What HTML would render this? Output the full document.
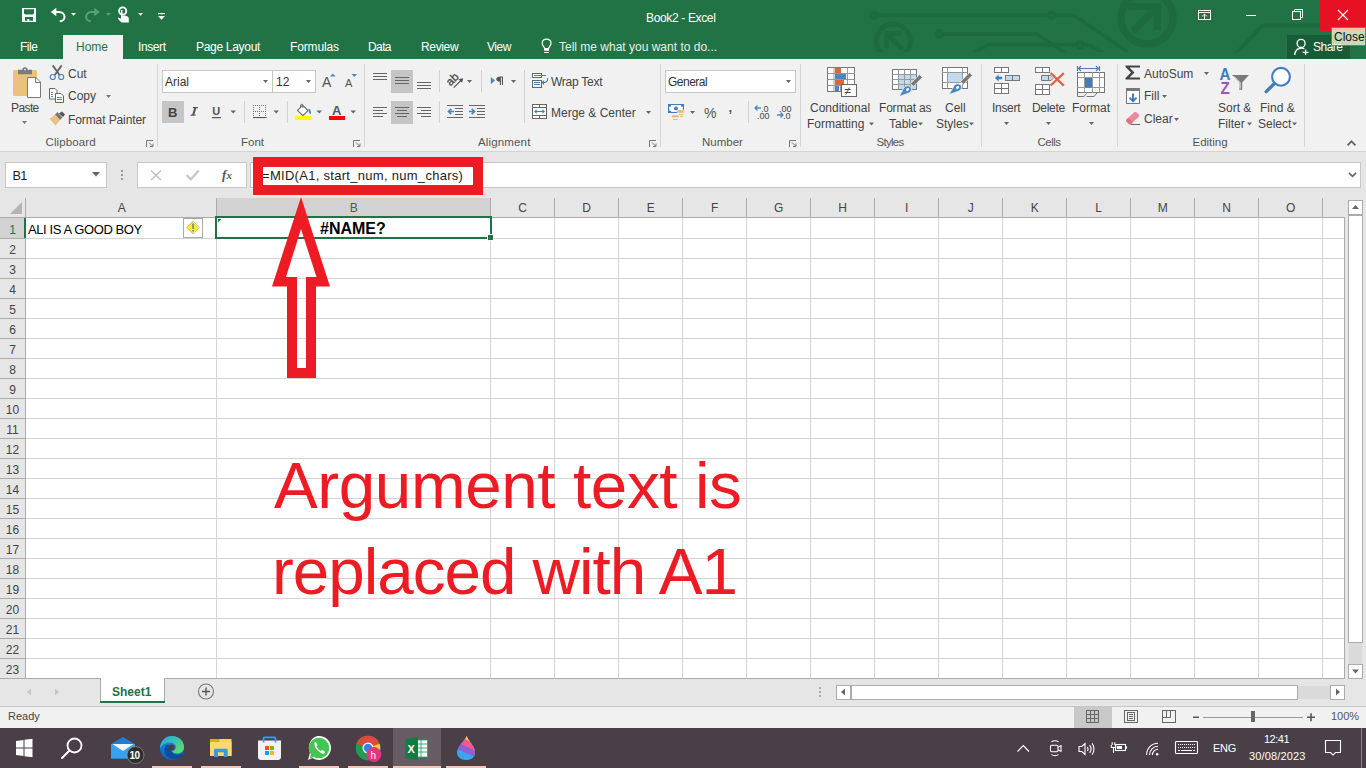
<!DOCTYPE html>
<html><head><meta charset="utf-8">
<style>
*{margin:0;padding:0;box-sizing:border-box}
html,body{width:1366px;height:768px;overflow:hidden;background:#fff;font-family:"Liberation Sans",sans-serif}
svg{font-family:"Liberation Sans",sans-serif}
.a{position:absolute}
.t{position:absolute;white-space:pre;line-height:1}
.rt{color:#444;font-size:12px}
.gl{color:#555;font-size:11.5px}
.wt{color:#fff;font-size:12px}
.sep{top:64px;width:1px;height:83px;background:#d5d5d5}
.hd{font-size:12px;color:#444}
.rl{left:0;width:25px;height:20px;text-align:center;font-size:12px;line-height:20px;color:#444;padding-top:2px}
.pb{top:766px;height:2px;background:#f6c6b5}
</style></head><body>
<!-- TITLE BAR -->
<div class="a" style="left:0;top:0;width:1366px;height:59px;background:#217346"></div>
<svg class="a" style="left:0;top:0" width="1366" height="59" viewBox="0 0 1366 59">
 <defs><clipPath id="cp"><rect x="0" y="0" width="1366" height="52"/></clipPath></defs>
 <g clip-path="url(#cp)" stroke="#1d6a3e" fill="none" stroke-width="3.8">
  <circle cx="873.8" cy="15.4" r="3"/>
  <path d="M877 15.4 H1048 M1055 15.4 H1074 L1128 52"/>
  <circle cx="1051.5" cy="15.4" r="3"/>
  <circle cx="893.3" cy="41" r="17" stroke-width="5"/>
  <circle cx="939.4" cy="33.8" r="3"/>
  <path d="M943 33.8 H1037 L1065 53"/>
  <path d="M974 53 L988 44.6 H1076 M1084 44.6 H1089 L1103 53"/>
  <circle cx="1080" cy="44.6" r="3"/>
  <circle cx="1147" cy="18" r="26" stroke-width="7.5"/>
  <path d="M1236 53 L1262.6 25.5 H1366"/>
 </g>
 <g clip-path="url(#cp)" fill="#1d6a3e">
  <path d="M884 31.3 H901 V36.3 H893 L904 47.3 L900.5 50.8 L889 39.5 V47.7 H884 Z"/>
 </g>
 <!-- big arrow up-right inside big circle -->
 <g fill="#1d6a3e">
  <path d="M1128 3 H1161 V30 H1154 V15 L1135 34 L1130 29 L1149 10 H1128 Z"/>
 </g>
</svg>
<!-- QAT icons -->
<svg class="a" style="left:0;top:0" width="180" height="32" viewBox="0 0 180 32">
 <path fill="#fff" fill-rule="evenodd" d="M22 8 H36 V22 H22 Z M24 9.3 V13.5 L25.2 14.6 H32.8 L34 13.5 V9.3 Z M25 17 V20.7 H27.3 V19 H29.3 V20.7 H33 V17 Z"/>
 <path d="M50.8 12 L56.3 7.8 V16.2 Z" fill="#fff"/>
 <path d="M55 12 H59 C62.2 12 64.5 14.2 64.5 17 C64.5 19.5 62.5 21.2 59.8 21.2" stroke="#fff" stroke-width="2" fill="none"/>
 <path d="M71 13 H76 L73.5 15.8 Z" fill="#fff"/>
 <path d="M99.85 12 L94.35 7.8 V16.2 Z" fill="#5c9f78"/>
 <path d="M95.65 12 H91.65 C88.45 12 86.15 14.2 86.15 17 C86.15 19.5 88.15 21.2 90.85 21.2" stroke="#5c9f78" stroke-width="2" fill="none"/>
 <path d="M106 13 H111 L108.5 15.8 Z" fill="#5c9f78"/>
 <circle cx="122.7" cy="11" r="3.6" fill="none" stroke="#fff" stroke-width="1.9"/>
 <path d="M121 10.5 C121 9.5 122.5 9.5 122.5 10.5 V15.5 C125 15.5 128.8 16 128.8 18.5 V22.6 H121.5 L117.6 18.5 L118.6 17.4 L121 18.8 Z" fill="#fff"/>
 <path d="M138 13 H143 L140.5 15.8 Z" fill="#fff"/>
 <rect x="158" y="13" width="7" height="1.2" fill="#fff"/>
 <path d="M158 16 H165 L161.5 19.8 Z" fill="#fff"/>
</svg>
<div class="t wt" style="left:646px;top:12px;letter-spacing:-0.35px">Book2 - Excel</div>
<!-- window controls -->
<svg class="a" style="left:1190;top:0;left:1190px" width="176" height="60" viewBox="1190 0 176 60">
 <rect x="1320" y="0" width="46" height="31" fill="#e81123"/>
 <g fill="none" stroke="#fff" stroke-width="1">
  <rect x="1198.5" y="10.5" width="12" height="9"/>
  <path d="M1198.5 12.5 H1210.5"/>
  <path d="M1204.5 19.5 V14 M1202.2 16.3 L1204.5 14 L1206.8 16.3"/>
  <path d="M1246 15.5 H1256"/>
  <rect x="1292.5" y="11.5" width="8" height="8"/>
  <path d="M1294.5 11.5 V9.5 H1302.5 V17.5 H1300.5"/>
  <path d="M1338 10 L1348 20 M1348 10 L1338 20" stroke-width="1.1"/>
 </g>
 <rect x="1287" y="35" width="63" height="24" fill="#185c37"/>
 <g fill="none" stroke="#fff" stroke-width="1.3">
  <circle cx="1301.1" cy="43.4" r="4"/>
  <path d="M1294.6 55 C1295.2 50.5 1298 48 1301.5 48 C1302.6 48 1303.5 48.3 1304.3 48.8"/>
  <path d="M1305.6 49.5 V55 M1302.6 52.4 H1308.6"/>
 </g>
</svg>
<div class="t wt" style="left:1313px;top:41px;letter-spacing:-0.5px">Share</div>
<div class="a" style="left:1331px;top:27px;width:35px;height:19px;background:rgba(255,255,225,0.75);border:1px solid rgba(80,80,80,0.7)"></div>
<div class="t" style="left:1334px;top:31px;font-size:12px;color:#111">Close</div>
<!-- tabs -->
<div class="t wt" style="left:20px;top:41px;letter-spacing:-0.5px">File</div>
<div class="a" style="left:63px;top:35px;width:60px;height:24px;background:#f1f1f1"></div>
<div class="t" style="left:76px;top:41px;font-size:12px;color:#217346">Home</div>
<div class="t wt" style="left:138px;top:41px;letter-spacing:-0.4px">Insert</div>
<div class="t wt" style="left:196px;top:41px;letter-spacing:-0.3px">Page Layout</div>
<div class="t wt" style="left:290px;top:41px;letter-spacing:-0.15px">Formulas</div>
<div class="t wt" style="left:368px;top:41px;letter-spacing:-0.6px">Data</div>
<div class="t wt" style="left:421px;top:41px;letter-spacing:-0.35px">Review</div>
<div class="t wt" style="left:487px;top:41px;letter-spacing:-0.5px">View</div>
<svg class="a" style="left:530px;top:34px" width="30" height="24" viewBox="530 34 30 24">
 <path d="M544.6 48.6 C544.6 46.8 542.2 45.6 542.2 43.4 C542.2 40.9 544.1 39.2 546.6 39.2 C549.1 39.2 551 40.9 551 43.4 C551 45.6 548.6 46.8 548.6 48.6 Z" fill="none" stroke="#fff" stroke-width="1.2"/>
 <rect x="544.2" y="48.4" width="4.8" height="2.4" fill="#fff"/>
 <rect x="544.3" y="52" width="4.6" height="1" fill="#fff"/>
</svg>
<div class="t wt" style="left:559px;top:41px;color:#e8efe9">Tell me what you want to do...</div>
<!-- RIBBON -->
<div class="a" style="left:0;top:59px;width:1366px;height:92px;background:#f1f1f1"></div>
<div class="a" style="left:0;top:151px;width:1366px;height:1px;background:#d4d4d4"></div>
<!-- group separators -->
<div class="a sep" style="left:157px"></div>
<div class="a sep" style="left:364px"></div>
<div class="a sep" style="left:660px"></div>
<div class="a sep" style="left:800px"></div>
<div class="a sep" style="left:981px"></div>
<div class="a sep" style="left:1117px"></div>
<div class="a sep" style="left:1304px"></div>
<!-- group labels -->
<div class="t gl" style="left:45.5px;top:137.3px;letter-spacing:0.1px">Clipboard</div>
<div class="t gl" style="left:241px;top:137.3px">Font</div>
<div class="t gl" style="left:478px;top:137.3px;letter-spacing:0.15px">Alignment</div>
<div class="t gl" style="left:702px;top:137.3px">Number</div>
<div class="t gl" style="left:876.5px;top:137.3px;letter-spacing:-0.7px">Styles</div>
<div class="t gl" style="left:1037.5px;top:137.3px;letter-spacing:-0.5px">Cells</div>
<div class="t gl" style="left:1192.5px;top:137.3px">Editing</div>
<!-- launchers -->
<svg class="a" style="left:0;top:59px" width="1366" height="93" viewBox="0 59 1366 93">
 <g fill="none" stroke="#777" stroke-width="1">
  <path d="M146.5 147 V140.5 H153 M149 142.5 L152.5 146"/><path d="M150 146.5 H153 V143.5" />
  <path d="M353.5 147 V140.5 H360 M356 142.5 L359.5 146"/><path d="M357 146.5 H360 V143.5"/>
  <path d="M649.5 147 V140.5 H656 M652 142.5 L655.5 146"/><path d="M653 146.5 H656 V143.5"/>
  <path d="M789.5 147 V140.5 H796 M792 142.5 L795.5 146"/><path d="M793 146.5 H796 V143.5"/>
 </g>
 <path d="M1347.5 145.3 L1351.5 141.3 L1355.5 145.3" fill="none" stroke="#666" stroke-width="1.9"/>
</svg>

<!-- CLIPBOARD -->
<svg class="a" style="left:0;top:59px" width="157" height="80" viewBox="0 59 157 80">
 <rect x="13" y="70" width="24" height="26" rx="1.5" fill="#ebc17b"/>
 <path d="M18 74.2 V69.8 H22.3 C22.3 68 23.3 67.2 25 67.2 C26.7 67.2 27.7 68 27.7 69.8 H32 V74.2 Z" fill="#7b7b7b"/>
 <circle cx="25" cy="69.6" r="0.9" fill="#f1f1f1"/>
 <path d="M27.5 77.5 H36 L40.5 82 V97.5 H27.5 Z" fill="#fff" stroke="#7b7b7b" stroke-width="1"/>
 <path d="M35.5 77.5 V82.5 H40.5" fill="none" stroke="#7b7b7b" stroke-width="1"/>
 <path d="M22 121 H27 L24.5 124 Z" fill="#777"/>
 <!-- scissors -->
 <path d="M52.7 65.4 L59.6 75 M61.7 65.4 L54.8 75" stroke="#666" stroke-width="1.9" fill="none"/>
 <circle cx="52.8" cy="77" r="2.5" fill="none" stroke="#4a86c5" stroke-width="1.2"/>
 <circle cx="61.2" cy="77" r="2.5" fill="none" stroke="#4a86c5" stroke-width="1.2"/>
 <!-- copy -->
 <path d="M49.5 88.5 H55 L57 90.5 V99 H49.5 Z" fill="#fff" stroke="#666" stroke-width="1"/>
 <path d="M55.5 93.5 H61 L63.5 96 V102.5 H55.5 Z" fill="#fff" stroke="#666" stroke-width="1"/>
 <path d="M51 92.5 H53 M51 94.5 H53 M51 96.5 H53 M57 97.5 H62 M57 99.5 H62" stroke="#4a86c5" stroke-width="1"/>
 <path d="M106 95 H111 L108.5 98 Z" fill="#777"/>
 <!-- format painter -->
 <path d="M49.5 119 L55 114.5 L60 120 L55.5 125.5 Z" fill="#ebc17b"/>
 <path d="M55 114.5 L60 120 L62.5 117.5 L57.5 112 Z" fill="#7b7b7b"/>
 <path d="M59 113.5 L62 111.5 L65 114.5 L63 117 Z" fill="#555"/>
</svg>
<div class="t rt" style="left:11px;top:102px;letter-spacing:-0.6px">Paste</div>
<div class="t rt" style="left:68px;top:68px">Cut</div>
<div class="t rt" style="left:68px;top:90px">Copy</div>
<div class="t rt" style="left:68px;top:114px;letter-spacing:-0.1px">Format Painter</div>

<!-- FONT -->
<div class="a" style="left:162px;top:70px;width:111px;height:23px;background:#fff;border:1px solid #c6c6c6"></div>
<div class="a" style="left:272px;top:70px;width:44px;height:23px;background:#fff;border:1px solid #c6c6c6"></div>
<div class="t rt" style="left:165px;top:76px;color:#333">Arial</div>
<div class="t rt" style="left:276px;top:76px;color:#333">12</div>
<div class="a" style="left:162px;top:101px;width:22px;height:22px;background:#c5c5c5"></div>
<svg class="a" style="left:157px;top:59px" width="206" height="80" viewBox="157 59 206 80">
 <path d="M263 80 H268 L265.5 83 Z M306 80 H311 L308.5 83 Z" fill="#666"/>
 <text x="322" y="87" font-family="Liberation Sans" font-size="14" fill="#555">A</text>
 <path d="M330 76.5 H335.5 L332.75 73.5 Z" fill="#4a86c5"/>
 <text x="345" y="87" font-family="Liberation Sans" font-size="11" fill="#555">A</text>
 <path d="M351.5 74 H357 L354.25 77 Z" fill="#4a86c5"/>
 <text x="168" y="117" font-family="Liberation Sans" font-weight="bold" font-size="13" fill="#444">B</text>
 <path d="M193 107 H198 L197.7 108.3 H196.3 L194.3 114.4 H195.7 L195.4 115.7 H190.5 L190.8 114.4 H192.2 L194.2 108.3 H192.7 Z" fill="#555"/>
 <text x="212.3" y="115.4" font-family="Liberation Sans" font-weight="bold" font-size="11" fill="#555">U</text>
 <rect x="212" y="117" width="9" height="1.2" fill="#555"/>
 <path d="M230.5 110.5 H236 L233.25 113.5 Z M273.5 110.5 H279 L276.25 113.5 Z M316.5 110.5 H322 L319.25 113.5 Z M350.5 110.5 H356 L353.25 113.5 Z" fill="#666"/>
 <rect x="244" y="101" width="1" height="22" fill="#d0d0d0"/>
 <rect x="287" y="101" width="1" height="22" fill="#d0d0d0"/>
 <g fill="#777">
  <path d="M253 105h1v1h-1zM255 105h1v1h-1zM257 105h1v1h-1zM259 105h1v1h-1zM261 105h1v1h-1zM263 105h1v1h-1zM265 105h1v1h-1z"/>
  <path d="M253 107h1v1h-1zM253 109h1v1h-1zM253 111h1v1h-1zM253 113h1v1h-1zM253 115h1v1h-1z"/>
  <path d="M265 107h1v1h-1zM265 109h1v1h-1zM265 111h1v1h-1zM265 113h1v1h-1zM265 115h1v1h-1z"/>
  <path d="M259 107h1v1h-1zM259 109h1v1h-1zM259 113h1v1h-1zM259 115h1v1h-1z"/>
  <path d="M255 111h1v1h-1zM257 111h1v1h-1zM259 111h1v1h-1zM261 111h1v1h-1zM263 111h1v1h-1z"/>
 </g>
 <rect x="253" y="117" width="13.5" height="1.1" fill="#555"/>
 <!-- fill bucket -->
 <path d="M297.5 110.3 L302.6 105.2 L308 110.6 L302.9 115.7 Z" fill="#fff" stroke="#666" stroke-width="1.1"/>
 <path d="M300.6 108.2 V105.2 C300.6 104 302.8 104 302.8 105.2 V108" stroke="#666" stroke-width="1" fill="none"/>
 <path d="M308.2 108.8 C310.8 109.4 311.8 112 310.2 114.6 C309.2 113 308.2 111 308.2 108.8 Z" fill="#4a86c5"/>
 <rect x="295" y="116" width="16.5" height="4" fill="#ffff00"/>
 <text x="332" y="115.4" font-family="Liberation Sans" font-weight="bold" font-size="13" fill="#555">A</text>
 <rect x="329" y="116" width="16" height="4" fill="#ff0000"/>
</svg>

<!-- ALIGNMENT -->
<div class="a" style="left:391px;top:70px;width:22px;height:23px;background:#c5c5c5"></div>
<div class="a" style="left:391px;top:101px;width:22px;height:23px;background:#c5c5c5"></div>
<svg class="a" style="left:364px;top:59px" width="296" height="80" viewBox="364 59 296 80">
 <g fill="#666">
  <rect x="373" y="73" width="14" height="1"/><rect x="373" y="76" width="14" height="1"/><rect x="373" y="79" width="14" height="1"/>
  <rect x="395" y="77" width="14" height="1"/><rect x="395" y="80" width="14" height="1"/><rect x="395" y="83" width="14" height="1"/>
  <rect x="417" y="82" width="14" height="1"/><rect x="417" y="85" width="14" height="1"/><rect x="417" y="88" width="14" height="1"/>
  <rect x="373" y="107" width="14" height="1"/><rect x="373" y="110" width="10" height="1"/><rect x="373" y="113" width="14" height="1"/><rect x="373" y="116" width="10" height="1"/>
  <rect x="395" y="107" width="14" height="1"/><rect x="397" y="110" width="10" height="1"/><rect x="395" y="113" width="14" height="1"/><rect x="397" y="116" width="10" height="1"/>
  <rect x="417" y="107" width="14" height="1"/><rect x="421" y="110" width="10" height="1"/><rect x="417" y="113" width="14" height="1"/><rect x="421" y="116" width="10" height="1"/>
 </g>
 <rect x="439" y="70" width="1" height="22" fill="#d0d0d0"/>
 <rect x="481" y="70" width="1" height="22" fill="#d0d0d0"/>
 <rect x="524" y="70" width="1" height="53" fill="#d0d0d0"/>
 <rect x="439" y="101" width="1" height="22" fill="#d0d0d0"/>
 <!-- orientation -->
 <text x="0" y="0" font-family="Liberation Sans" font-size="11.5" fill="#4d4d4d" stroke="#4d4d4d" stroke-width="0.35" transform="translate(450.5 86.5) rotate(-45)">ab</text>
 <path d="M453.8 87.6 L461.5 79.9" stroke="#4d4d4d" stroke-width="1.2"/>
 <path d="M463.2 78.2 L458.6 79.3 L462.1 82.8 Z" fill="#4d4d4d"/>
 <path d="M467 80 H472 L469.5 83 Z" fill="#666"/>
 <!-- rtl -->
 <path d="M490.8 76.9 L495 80.6 L490.8 84.3 Z" fill="#4a86c5"/>
 <path d="M500.5 76.5 H503 V85 H501.9 V77.6 H500.9 V85 H499.8 V81.6 C497.8 81.6 496.2 80.6 496.2 79 C496.2 77.5 497.8 76.5 500.5 76.5 Z" fill="#555"/>
 <path d="M511 80 H516 L513.5 83 Z" fill="#666"/>
 <!-- indent -->
 <g fill="#666">
  <rect x="447" y="105" width="16" height="1"/><rect x="455" y="108" width="8" height="1"/><rect x="455" y="111" width="8" height="1"/><rect x="455" y="114" width="8" height="1"/><rect x="447" y="117" width="16" height="1"/>
  <rect x="469" y="105" width="16" height="1"/><rect x="477" y="108" width="8" height="1"/><rect x="477" y="111" width="8" height="1"/><rect x="477" y="114" width="8" height="1"/><rect x="469" y="117" width="16" height="1"/>
 </g>
 <path d="M448.5 111.5 H454 M451.3 108.8 L448.5 111.5 L451.3 114.2" stroke="#4a86c5" stroke-width="1.7" fill="none"/>
 <path d="M469 111.5 H474.5 M471.7 108.8 L474.5 111.5 L471.7 114.2" stroke="#4a86c5" stroke-width="1.7" fill="none"/>
 <!-- wrap text icon -->
 <g fill="#fff" stroke="#666" stroke-width="1">
  <rect x="532.5" y="73.5" width="9" height="4"/>
  <rect x="532.5" y="80.5" width="9" height="7"/>
 </g>
 <path d="M534 75.5 H546 M534 82.5 H540 M534 84.5 H540" stroke="#3f7cc0" stroke-width="1" fill="none"/>
 <path d="M547.6 78.2 C548 81 546.5 82.6 543.2 82.6" stroke="#3f7cc0" stroke-width="1.2" fill="none"/>
 <path d="M541.3 82.6 L544 80.2 V85 Z" fill="#3f7cc0"/>
 <!-- merge -->
 <g fill="#fff" stroke="#666" stroke-width="1">
  <rect x="532.5" y="104.5" width="14" height="14"/>
 </g>
 <path d="M532.5 107.5 H546.5 M532.5 115.5 H546.5 M539.5 104.5 V107.5 M539.5 115.5 V118.5" stroke="#666" stroke-width="1" fill="none"/>
 <path d="M536 111.5 H543" stroke="#3f7cc0" stroke-width="1.1"/>
 <path d="M534 111.5 L536.6 109.2 V113.8 Z M545 111.5 L542.4 109.2 V113.8 Z" fill="#3f7cc0"/>
 <path d="M646 111 H651 L648.5 114 Z" fill="#666"/>
</svg>
<div class="t rt" style="left:551px;top:76px;letter-spacing:-0.25px">Wrap Text</div>
<div class="t rt" style="left:551px;top:107px">Merge &amp; Center</div>

<!-- NUMBER -->
<div class="a" style="left:665px;top:70px;width:131px;height:23px;background:#fff;border:1px solid #c6c6c6"></div>
<div class="t rt" style="left:668px;top:76px;color:#333;letter-spacing:-0.5px">General</div>
<svg class="a" style="left:661px;top:59px" width="139" height="80" viewBox="661 59 139 80">
 <path d="M786 80 H791 L788.5 83 Z M690 111 H695 L692.5 114 Z" fill="#666"/>
 <path fill-rule="evenodd" fill="#3f7cc0" d="M668 104 H684 V113 H668 Z M671 105.3 H681 V106.8 H682.6 V110.4 H681 V111.7 H671 V110.4 H669.4 V106.8 H671 Z"/>
 <path d="M669.4 106.8 H671 V105.3 H681 V106.8 H682.6 V110.4 H681 V111.7 H671 V110.4 H669.4 Z" fill="#fff"/>
 <circle cx="676" cy="108.4" r="1.9" fill="#3f7cc0"/>
 <rect x="676.8" y="110" width="7.4" height="2.8" rx="1.2" fill="#e8b96a" stroke="#f1f1f1" stroke-width="0.6"/>
 <rect x="679" y="114" width="4.5" height="1" fill="#e8b96a"/>
 <rect x="680" y="116" width="3" height="1" fill="#e8b96a"/>
 <rect x="671.6" y="114.9" width="7.4" height="2.8" rx="1.2" fill="#e8b96a" stroke="#f1f1f1" stroke-width="0.6"/>
 <rect x="673" y="119" width="4.6" height="1" fill="#e8b96a"/>
 <text x="704" y="118" font-family="Liberation Sans" font-size="14" fill="#555">%</text>
 <text x="728.5" y="112" font-family="Liberation Sans" font-weight="bold" font-size="13" fill="#555">,</text>
 <rect x="748" y="101" width="1" height="22" fill="#d0d0d0"/>
 <text x="761" y="112" font-family="Liberation Sans" font-size="9" fill="#444">.0</text>
 <text x="757" y="119" font-family="Liberation Sans" font-size="9" fill="#444">.00</text>
 <path d="M755 108 H761 M757.5 105.5 L755 108 L757.5 110.5" stroke="#4a86c5" stroke-width="1.3" fill="none"/>
 <text x="779" y="112" font-family="Liberation Sans" font-size="9" fill="#444">.00</text>
 <text x="783" y="119" font-family="Liberation Sans" font-size="9" fill="#444">.0</text>
 <path d="M777 115 H783 M780.5 112.5 L783 115 L780.5 117.5" stroke="#4a86c5" stroke-width="1.3" fill="none"/>
</svg>
<!-- STYLES -->
<svg class="a" style="left:801px;top:59px" width="180" height="80" viewBox="801 59 180 80">
 <!-- conditional formatting -->
 <g fill="#fff" stroke="#777" stroke-width="1">
  <rect x="827.5" y="67.5" width="27" height="24"/>
 </g>
  <path d="M827.5 73.5 H854.5 M827.5 79.5 H854.5 M827.5 85.5 H854.5 M834 67.5 V91.5 M840.5 67.5 V91.5 M847.5 67.5 V91.5" stroke="#999" stroke-width="1" fill="none"/>
  <rect x="835" y="68" width="6" height="5" fill="#e0623f"/><rect x="835" y="74" width="11" height="5" fill="#4a86c5"/><rect x="835" y="80" width="9" height="5" fill="#e0623f"/><rect x="835" y="86" width="4" height="5" fill="#4a86c5"/>
 <rect x="841.5" y="84.5" width="15" height="12" fill="#fff" stroke="#666" stroke-width="1"/>
 <text x="844.5" y="95" font-family="Liberation Sans" font-size="12" fill="#444">≠</text>
 <!-- format as table -->
 <rect x="892.5" y="69.5" width="24" height="20" fill="#fff" stroke="#777"/>
 <rect x="898" y="74" width="18" height="15" fill="#c5d9ee"/>
 <path d="M892.5 74.5 H916.5 M892.5 79.5 H916.5 M892.5 84.5 H916.5 M898.5 69.5 V89.5 M904.5 69.5 V89.5 M910.5 69.5 V89.5" stroke="#999" fill="none"/>
 <g transform="translate(0 0)">
 <path d="M922.4 77.4 L919.6 74.6 L910.6 83.6 L913.4 86.4 Z" fill="#777" stroke="#f1f1f1" stroke-width="0.8"/>
 <path d="M899 96.6 L904 87.8 C905.5 85.3 909.6 85.3 911 87.4 C912.2 89.4 911.2 91.8 909 93 Z" fill="#4a86c5" stroke="#f1f1f1" stroke-width="0.8"/>
 <ellipse cx="907.6" cy="89.6" rx="1.7" ry="1.3" fill="#fff" transform="rotate(-40 907.6 89.6)"/>
 </g>
 <!-- cell styles -->
 <rect x="942.5" y="67.5" width="25" height="21" fill="#fff" stroke="#777"/>
 <rect x="948" y="72" width="14" height="10.5" fill="#c5d9ee"/>
 <path d="M942.5 72.5 H967.5 M942.5 82.5 H967.5 M947.5 67.5 V88.5 M962.5 67.5 V88.5" stroke="#999" fill="none"/>
 <g transform="translate(50 -2)">
 <path d="M922.4 77.4 L919.6 74.6 L910.6 83.6 L913.4 86.4 Z" fill="#777" stroke="#f1f1f1" stroke-width="0.8"/>
 <path d="M899 96.6 L904 87.8 C905.5 85.3 909.6 85.3 911 87.4 C912.2 89.4 911.2 91.8 909 93 Z" fill="#4a86c5" stroke="#f1f1f1" stroke-width="0.8"/>
 <ellipse cx="907.6" cy="89.6" rx="1.7" ry="1.3" fill="#fff" transform="rotate(-40 907.6 89.6)"/>
 </g>
 <path d="M869 122.5 H874 L871.5 125.5 Z M918 122.5 H923 L920.5 125.5 Z M969 122.5 H974 L971.5 125.5 Z" fill="#666"/>
</svg>
<div class="t rt" style="left:810px;top:102px">Conditional</div>
<div class="t rt" style="left:807px;top:118px">Formatting</div>
<div class="t rt" style="left:879px;top:102px;letter-spacing:-0.2px">Format as</div>
<div class="t rt" style="left:889px;top:118px">Table</div>
<div class="t rt" style="left:945px;top:102px">Cell</div>
<div class="t rt" style="left:936px;top:118px">Styles</div>

<!-- CELLS -->
<svg class="a" style="left:982px;top:59px" width="135" height="80" viewBox="982 59 135 80">
 <g fill="#fff" stroke="#777" stroke-width="1">
  <rect x="994.5" y="67.5" width="14" height="5"/><path d="M1001.5 67.5 V72.5"/>
  <rect x="1005.5" y="75.5" width="14" height="5" fill="#c5d9ee"/><path d="M1012.5 75.5 V80.5"/>
  <rect x="994.5" y="83.5" width="14" height="10"/><path d="M1001.5 83.5 V93.5 M994.5 88.5 H1008.5"/>
 </g>
 <path d="M995 78 L998.6 74.6 V76.8 H1002.2 V79.2 H998.6 V81.4 Z" fill="#3f7cc0"/>
 <g fill="#fff" stroke="#777" stroke-width="1">
  <rect x="1035.5" y="67.5" width="14" height="5"/><path d="M1042.5 67.5 V72.5"/>
  <rect x="1035.5" y="84.5" width="14" height="10"/><path d="M1042.5 84.5 V94.5 M1035.5 89.5 H1049.5"/>
 </g>
 <path d="M1041.5 75.5 H1051 L1053.5 78 L1051 80.5 H1041.5 Z" fill="#c5d9ee" stroke="#777" stroke-width="1"/>
 <path d="M1048.5 75.5 V80.5" stroke="#777" stroke-width="1"/>
 <path d="M1050.6 73 L1063.8 85.7 M1063.8 73.2 L1050.6 85.5" stroke="#f1f1f1" stroke-width="3.6" fill="none"/>
 <path d="M1050.6 73 L1063.8 85.7 M1063.8 73.2 L1050.6 85.5" stroke="#e0623f" stroke-width="2.3" fill="none"/>
 <!-- format -->
 <path d="M1077.5 66 V71 M1099.5 66 V71 M1078 68.5 H1099 M1081 66 L1078.5 68.5 L1081 71 M1096 66 L1098.5 68.5 L1096 71" stroke="#3f7cc0" stroke-width="1.1" fill="none"/>
 <rect x="1077.5" y="72.5" width="27" height="20" fill="#fff" stroke="#777"/>
 <path d="M1077.5 77.5 H1104.5 M1077.5 87.5 H1104.5 M1084.5 72.5 V92.5 M1092.5 72.5 V92.5 M1099.5 72.5 V92.5" stroke="#999" fill="none"/>
 <rect x="1085" y="78" width="7" height="9.5" fill="#3f7cc0"/>
 <path d="M1077.5 92.5 V96.5 H1084 L1086.5 93.5 M1086.5 96.5 H1094 L1097.5 92.5" stroke="#777" fill="none"/>
 <path d="M1004 122 H1009 L1006.5 125 Z M1046 122 H1051 L1048.5 125 Z M1089 122 H1094 L1091.5 125 Z" fill="#666"/>
</svg>
<div class="t rt" style="left:992px;top:102px;letter-spacing:-0.3px">Insert</div>
<div class="t rt" style="left:1032px;top:102px;letter-spacing:-0.3px">Delete</div>
<div class="t rt" style="left:1072px;top:102px">Format</div>

<!-- EDITING -->
<svg class="a" style="left:1118px;top:59px" width="248" height="80" viewBox="1118 59 248 80">
 <path d="M1125.5 65.5 H1140 V67.5 H1129.5 L1134.5 72.5 L1129.5 77.5 H1140 V79.5 H1125.5 V78 L1131 72.5 L1125.5 67 Z" fill="#444"/>
 <path d="M1204 72 H1209 L1206.5 75 Z M1162 95 H1167 L1164.5 98 Z M1174 118 H1179 L1176.5 121 Z M1247 122.5 H1252 L1249.5 125.5 Z M1292 122.5 H1297 L1294.5 125.5 Z" fill="#666"/>
 <rect x="1126.5" y="88.5" width="13" height="15" fill="#fff" stroke="#777"/>
 <rect x="1126" y="88" width="14" height="3" fill="#777"/>
 <path d="M1133 93.4 V101 M1129.5 97.6 L1133 101.2 L1136.5 97.6" stroke="#3f7cc0" stroke-width="2" fill="none"/>
 <path d="M1126.5 119.5 L1134.2 112.2 C1135 111.5 1135.8 111.5 1136.5 112.2 L1138.8 114.5 C1139.5 115.2 1139.5 116 1138.8 116.7 L1131 124 Z" fill="#ea8a9c"/><path d="M1126.5 119.5 L1128.3 117.8 L1132.8 122.3 L1131 124 C1130.3 124.7 1129.5 124.7 1128.8 124 L1126.5 121.7 C1125.8 121 1125.8 120.2 1126.5 119.5 Z" fill="#e06f86"/>
 <path d="M1130.7 124.5 H1140.2" stroke="#666" stroke-width="1"/>
 <text x="0" y="0" font-family="Liberation Sans" font-size="16.5" font-weight="bold" fill="#3f7cc0" transform="translate(1219.6 80) scale(0.92 1)">A</text>
 <text x="0" y="0" font-family="Liberation Sans" font-size="16.5" font-weight="bold" fill="#9b59b6" transform="translate(1220.6 93.8) scale(0.92 1)">Z</text>
 <path d="M1232 75 H1249 L1242.2 82.6 V89.7 H1239.2 V82.6 Z" fill="#7a7a7a"/>
 <path d="M1233.8 76.3 L1240 82.5 V88.6" stroke="#fff" stroke-width="1" fill="none"/>
 <circle cx="1281" cy="76.8" r="8.9" fill="#fff" stroke="#3f7cc0" stroke-width="2.1"/>
 <path d="M1274.2 83.8 L1266.2 91.6" stroke="#3f7cc0" stroke-width="3.4" stroke-linecap="round"/>
</svg>
<div class="t rt" style="left:1144px;top:68px">AutoSum</div>
<div class="t rt" style="left:1144px;top:90px">Fill</div>
<div class="t rt" style="left:1144px;top:113px">Clear</div>
<div class="t rt" style="left:1218px;top:102px">Sort &amp;</div>
<div class="t rt" style="left:1218px;top:118px">Filter</div>
<div class="t rt" style="left:1260px;top:102px">Find &amp;</div>
<div class="t rt" style="left:1258px;top:118px">Select</div>
<!-- FORMULA BAR -->
<div class="a" style="left:0;top:152px;width:1366px;height:46px;background:#e6e6e6"></div>
<div class="a" style="left:5px;top:162px;width:102px;height:26px;background:#fff;border:1px solid #c6c6c6"></div>
<div class="t" style="left:12.5px;top:170px;font-size:12.7px;color:#222;letter-spacing:-0.8px">B1</div>
<div class="a" style="left:137px;top:162px;width:110px;height:26px;background:#fff;border:1px solid #c6c6c6"></div>
<div class="a" style="left:250px;top:162px;width:1111px;height:26px;background:#fff;border:1px solid #c6c6c6"></div>
<svg class="a" style="left:0;top:152px" width="1366" height="46" viewBox="0 152 1366 46">
 <path d="M92 172 H100 L96 176.5 Z" fill="#666"/>
 <rect x="121" y="170" width="2" height="2" fill="#999"/><rect x="121" y="174" width="2" height="2" fill="#999"/><rect x="121" y="178" width="2" height="2" fill="#999"/>
 <path d="M151 170.5 L161 180 M161 170.5 L151 180" stroke="#c2c2c2" stroke-width="1.6"/>
 <path d="M186.5 175 L190.8 179.3 L198.8 170.5" stroke="#c8c8c8" stroke-width="2.3" fill="none"/>
 <text x="222" y="179" font-family="Liberation Serif" font-style="italic" font-weight="bold" font-size="13" fill="#555">f</text>
 <text x="226.5" y="179" font-family="Liberation Serif" font-style="italic" font-weight="bold" font-size="11" fill="#555">x</text>
 <path d="M1349 172.8 L1352.5 176.3 L1356 172.8" stroke="#666" stroke-width="1.7" fill="none"/>
</svg>
<div class="t" style="left:262px;top:169px;font-size:13px;color:#222;letter-spacing:0.29px">=MID(A1, start_num, num_chars)</div>

<!-- GRID -->
<div class="a" style="left:0;top:198px;width:1366px;height:481px;background:#e6e6e6"></div>
<div class="a" style="left:26px;top:218px;width:1318px;height:460px;background:#fff"></div>
<div class="a" style="left:217px;top:198px;width:273px;height:19px;background:#d2d2d2"></div>
<div class="a" style="left:0;top:218px;width:25px;height:20px;background:#d2d2d2"></div>
<svg class="a" style="left:0;top:198px" width="1366" height="481" viewBox="0 198 1366 481">
 <path d="M10 214 H22 V202 Z" fill="#b4b4b4"/>
 <g id="hl" fill="#d4d4d4">
  <rect x="26" y="258" width="1318" height="1"/><rect x="26" y="278" width="1318" height="1"/><rect x="26" y="298" width="1318" height="1"/><rect x="26" y="318" width="1318" height="1"/><rect x="26" y="338" width="1318" height="1"/><rect x="26" y="358" width="1318" height="1"/><rect x="26" y="378" width="1318" height="1"/><rect x="26" y="398" width="1318" height="1"/><rect x="26" y="418" width="1318" height="1"/><rect x="26" y="438" width="1318" height="1"/><rect x="26" y="458" width="1318" height="1"/><rect x="26" y="478" width="1318" height="1"/><rect x="26" y="498" width="1318" height="1"/><rect x="26" y="518" width="1318" height="1"/><rect x="26" y="538" width="1318" height="1"/><rect x="26" y="558" width="1318" height="1"/><rect x="26" y="578" width="1318" height="1"/><rect x="26" y="598" width="1318" height="1"/><rect x="26" y="618" width="1318" height="1"/><rect x="26" y="638" width="1318" height="1"/><rect x="26" y="658" width="1318" height="1"/>
  <rect x="26" y="238" width="1318" height="1"/>
  <rect x="216" y="218" width="1" height="460"/><rect x="490" y="218" width="1" height="460"/><rect x="554" y="218" width="1" height="460"/><rect x="618" y="218" width="1" height="460"/><rect x="682" y="218" width="1" height="460"/><rect x="746" y="218" width="1" height="460"/><rect x="810" y="218" width="1" height="460"/><rect x="874" y="218" width="1" height="460"/><rect x="938" y="218" width="1" height="460"/><rect x="1002" y="218" width="1" height="460"/><rect x="1066" y="218" width="1" height="460"/><rect x="1130" y="218" width="1" height="460"/><rect x="1194" y="218" width="1" height="460"/><rect x="1258" y="218" width="1" height="460"/><rect x="1322" y="218" width="1" height="460"/>
 </g>
 <g fill="#ababab">
  <rect x="216" y="198" width="1" height="19"/><rect x="490" y="198" width="1" height="19"/><rect x="554" y="198" width="1" height="19"/><rect x="618" y="198" width="1" height="19"/><rect x="682" y="198" width="1" height="19"/><rect x="746" y="198" width="1" height="19"/><rect x="810" y="198" width="1" height="19"/><rect x="874" y="198" width="1" height="19"/><rect x="938" y="198" width="1" height="19"/><rect x="1002" y="198" width="1" height="19"/><rect x="1066" y="198" width="1" height="19"/><rect x="1130" y="198" width="1" height="19"/><rect x="1194" y="198" width="1" height="19"/><rect x="1258" y="198" width="1" height="19"/><rect x="1322" y="198" width="1" height="19"/>
  <rect x="0" y="238" width="25" height="1"/><rect x="0" y="258" width="25" height="1"/><rect x="0" y="278" width="25" height="1"/><rect x="0" y="298" width="25" height="1"/><rect x="0" y="318" width="25" height="1"/><rect x="0" y="338" width="25" height="1"/><rect x="0" y="358" width="25" height="1"/><rect x="0" y="378" width="25" height="1"/><rect x="0" y="398" width="25" height="1"/><rect x="0" y="418" width="25" height="1"/><rect x="0" y="438" width="25" height="1"/><rect x="0" y="458" width="25" height="1"/><rect x="0" y="478" width="25" height="1"/><rect x="0" y="498" width="25" height="1"/><rect x="0" y="518" width="25" height="1"/><rect x="0" y="538" width="25" height="1"/><rect x="0" y="558" width="25" height="1"/><rect x="0" y="578" width="25" height="1"/><rect x="0" y="598" width="25" height="1"/><rect x="0" y="618" width="25" height="1"/><rect x="0" y="638" width="25" height="1"/><rect x="0" y="658" width="25" height="1"/>
  <rect x="25" y="198" width="1" height="481"/>
  <rect x="0" y="217" width="1345" height="1"/>
  <rect x="1344" y="217" width="1" height="462"/>
  <rect x="0" y="678" width="1345" height="1"/>
 </g>
 <!-- selection -->
 <rect x="24" y="218" width="2" height="20" fill="#217346"/>
 <rect x="217" y="216" width="273" height="1" fill="#217346"/>
 <rect x="216" y="217" width="275" height="21" fill="none" stroke="#217346" stroke-width="2"/>
 <rect x="487" y="234" width="7" height="7" fill="#fff"/><rect x="488" y="235" width="5" height="5" fill="#217346"/>
 <path d="M218 219 H221.6 L218 222.6 Z" fill="#217346"/>
 <!-- warning icon -->
 <defs><pattern id="chk" width="2" height="2" patternUnits="userSpaceOnUse"><rect width="2" height="2" fill="#fbf3a0"/><rect width="1" height="1" fill="#f2d41c"/><rect x="1" y="1" width="1" height="1" fill="#f2d41c"/></pattern></defs>
 <rect x="183.5" y="218.5" width="19" height="19" fill="#fff" stroke="#ababab"/>
 <path d="M193 221 L199.5 227.5 L193 234 L186.5 227.5 Z" fill="url(#chk)" stroke="#b8b8b8" stroke-width="0.7"/>
 <rect x="192.2" y="223.5" width="1.7" height="5.5" fill="#888"/>
 <rect x="192.2" y="230" width="1.7" height="1.6" fill="#888"/>
 <!-- vertical scrollbar -->
 <rect x="1348.5" y="200.5" width="14" height="14" fill="#fff" stroke="#ababab"/>
 <path d="M1352 209 H1359 L1355.5 205 Z" fill="#666"/>
 <rect x="1348.5" y="215.5" width="14" height="427" fill="#fff" stroke="#ababab"/>
 <rect x="1349" y="643" width="13" height="21" fill="#dadada"/>
 <rect x="1348.5" y="664.5" width="14" height="14" fill="#fff" stroke="#ababab"/>
 <path d="M1352 669.5 H1359 L1355.5 673.5 Z" fill="#666"/>
</svg>
<!-- column labels -->
<div class="t hd" style="left:121.7px;top:202px;transform:translateX(-50%)">A</div>
<div class="t hd" style="left:353.7px;top:202px;transform:translateX(-50%);color:#217346">B</div>
<div class="t hd" style="left:522.7px;top:202px;transform:translateX(-50%)">C</div>
<div class="t hd" style="left:586.7px;top:202px;transform:translateX(-50%)">D</div>
<div class="t hd" style="left:650.7px;top:202px;transform:translateX(-50%)">E</div>
<div class="t hd" style="left:714.7px;top:202px;transform:translateX(-50%)">F</div>
<div class="t hd" style="left:778.7px;top:202px;transform:translateX(-50%)">G</div>
<div class="t hd" style="left:842.7px;top:202px;transform:translateX(-50%)">H</div>
<div class="t hd" style="left:906.7px;top:202px;transform:translateX(-50%)">I</div>
<div class="t hd" style="left:970.7px;top:202px;transform:translateX(-50%)">J</div>
<div class="t hd" style="left:1034.7px;top:202px;transform:translateX(-50%)">K</div>
<div class="t hd" style="left:1098.7px;top:202px;transform:translateX(-50%)">L</div>
<div class="t hd" style="left:1162.7px;top:202px;transform:translateX(-50%)">M</div>
<div class="t hd" style="left:1226.7px;top:202px;transform:translateX(-50%)">N</div>
<div class="t hd" style="left:1290.7px;top:202px;transform:translateX(-50%)">O</div>
<!-- row labels -->
<div class="a rl" style="top:218px;color:#217346">1</div>
<div class="a rl" style="top:238px">2</div>
<div class="a rl" style="top:258px">3</div>
<div class="a rl" style="top:278px">4</div>
<div class="a rl" style="top:298px">5</div>
<div class="a rl" style="top:318px">6</div>
<div class="a rl" style="top:338px">7</div>
<div class="a rl" style="top:358px">8</div>
<div class="a rl" style="top:378px">9</div>
<div class="a rl" style="top:398px">10</div>
<div class="a rl" style="top:418px">11</div>
<div class="a rl" style="top:438px">12</div>
<div class="a rl" style="top:458px">13</div>
<div class="a rl" style="top:478px">14</div>
<div class="a rl" style="top:498px">15</div>
<div class="a rl" style="top:518px">16</div>
<div class="a rl" style="top:538px">17</div>
<div class="a rl" style="top:558px">18</div>
<div class="a rl" style="top:578px">19</div>
<div class="a rl" style="top:598px">20</div>
<div class="a rl" style="top:618px">21</div>
<div class="a rl" style="top:638px">22</div>
<div class="a rl" style="top:658px">23</div>
<!-- cell contents -->
<div class="t" style="left:28px;top:223px;font-size:13px;color:#000;letter-spacing:-0.4px">ALI IS A GOOD BOY</div>
<div class="t" style="left:320px;top:221px;font-size:16px;font-weight:bold;color:#000">#NAME?</div>

<!-- SHEET TABS -->
<div class="a" style="left:0;top:679px;width:1366px;height:27px;background:#e6e6e6"></div>
<div class="a" style="left:0;top:706px;width:1366px;height:1px;background:#c6c6c6"></div>
<div class="a" style="left:100px;top:678px;width:65px;height:25px;background:#fff;border-left:1px solid #ababab;border-right:1px solid #ababab"></div>
<div class="a" style="left:100px;top:701px;width:65px;height:2px;background:#217346"></div>
<div class="t" style="left:112px;top:686px;font-size:12px;font-weight:bold;color:#217346">Sheet1</div>
<svg class="a" style="left:0;top:679px" width="1366" height="27" viewBox="0 679 1366 27">
 <path d="M27 692 L31 688.5 V695.5 Z" fill="#c6c6c6"/>
 <path d="M55 688.5 V695.5 L59 692 Z" fill="#c6c6c6"/>
 <circle cx="206" cy="691.5" r="7.5" fill="none" stroke="#777" stroke-width="1.1"/>
 <path d="M206 687.5 V695.5 M202 691.5 H210" stroke="#555" stroke-width="1.4"/>
 <rect x="819" y="687" width="2" height="2" fill="#aaa"/><rect x="819" y="691" width="2" height="2" fill="#aaa"/><rect x="819" y="695" width="2" height="2" fill="#aaa"/>
 <rect x="836.5" y="685.5" width="14" height="14" fill="#fff" stroke="#ababab"/>
 <path d="M841 692 L845 688.5 V695.5 Z" fill="#666"/>
 <rect x="851.5" y="685.5" width="446" height="14" fill="#fff" stroke="#ababab"/>
 <rect x="1298" y="686" width="32" height="13" fill="#dadada"/>
 <rect x="1330.5" y="685.5" width="14" height="14" fill="#fff" stroke="#ababab"/>
 <path d="M1336 688.5 V695.5 L1340 692 Z" fill="#666"/>
</svg>

<!-- STATUS BAR -->
<div class="a" style="left:0;top:707px;width:1366px;height:21px;background:#f1f1f1"></div>
<div class="t" style="left:8px;top:711px;font-size:11px;color:#444">Ready</div>
<div class="a" style="left:1074px;top:707px;width:38px;height:21px;background:#c8c8c8"></div>
<svg class="a" style="left:1070px;top:707px" width="296" height="21" viewBox="1070 707 296 21">
 <g fill="none" stroke="#666" stroke-width="1">
  <rect x="1086.5" y="710.5" width="12" height="12"/>
  <path d="M1090.5 710.5 V722.5 M1094.5 710.5 V722.5 M1086.5 714.5 H1098.5 M1086.5 718.5 H1098.5"/>
  <rect x="1124.5" y="710.5" width="13" height="12"/>
  <rect x="1127.5" y="712.5" width="7" height="8"/>
  <path d="M1129 714.5 H1133 M1129 716.5 H1133 M1129 718.5 H1133"/>
  <rect x="1162.5" y="710.5" width="13" height="12"/>
  <path d="M1162.5 717.5 H1170.5 V710.5 M1166.5 710.5 V717.5"/>
 </g>
 <rect x="1193" y="716.5" width="6" height="1.5" fill="#555"/>
 <rect x="1203" y="717" width="100" height="1" fill="#999"/>
 <rect x="1251" y="711" width="4" height="11" fill="#666"/>
 <path d="M1307 717.3 H1315 M1311 713.3 V721.3" stroke="#555" stroke-width="1.6"/>
</svg>
<div class="t" style="left:1331px;top:711px;font-size:11px;color:#555">100%</div>
<!-- TASKBAR -->
<div class="a" style="left:0;top:728px;width:1366px;height:40px;background:#4a3e47"></div>
<div class="a" style="left:393px;top:728px;width:48px;height:40px;background:#675c64"></div>
<div class="a pb" style="left:152px;width:40px"></div>
<div class="a pb" style="left:201px;width:40px"></div>
<div class="a pb" style="left:299px;width:40px"></div>
<div class="a pb" style="left:348px;width:40px"></div>
<div class="a pb" style="left:393px;width:48px"></div>
<div class="a pb" style="left:446px;width:40px"></div>
<svg class="a" style="left:0;top:728px" width="1366" height="40" viewBox="0 728 1366 40">
 <!-- start -->
 <path d="M16 741 L23.5 740 V747.5 H16 Z M24.5 739.8 L32.5 738.7 V747.5 H24.5 Z M16 748.5 H23.5 V756 L16 755 Z M24.5 748.5 H32.5 V757.3 L24.5 756.2 Z" fill="#fff"/>
 <!-- search -->
 <circle cx="74.5" cy="745.5" r="7" fill="none" stroke="#fff" stroke-width="1.8"/>
 <path d="M69.5 750.5 L62 758" stroke="#fff" stroke-width="2" stroke-linecap="round"/>
 <!-- mail -->
 <path d="M111 744 L123 737 L135 744 V758.5 H111 Z" fill="#1f7dd6"/>
 <path d="M111 744 H135 V758.5 H111 Z" fill="#35a2ee"/>
 <path d="M112.5 744 L123 751 L133.5 744 Z" fill="#f4f4f4"/>
 <circle cx="135.5" cy="755" r="8.5" fill="#2f2f2f" stroke="#8a8a8a" stroke-width="0.8"/>
 <text x="129.5" y="759" font-family="Liberation Sans" font-weight="bold" font-size="10" fill="#fff" letter-spacing="-0.5">10</text>
 <!-- edge -->
 <defs>
  <linearGradient id="eg" x1="0" y1="0" x2="1" y2="1"><stop offset="0" stop-color="#1fa6ec"/><stop offset="1" stop-color="#63e35b"/></linearGradient>
  <linearGradient id="eb" x1="0" y1="0" x2="0" y2="1"><stop offset="0" stop-color="#1d8ee6"/><stop offset="1" stop-color="#0d62c0"/></linearGradient>
  <clipPath id="dropc"><path d="M466.7 735.9 C468 741 475 745 475 752.5 C475 757.5 471 760 466 760 C461 760 457 757 457 752.5 C457 746 465 741 466.7 735.9 Z"/></clipPath>
 </defs>
 <circle cx="172" cy="748" r="12" fill="url(#eb)"/>
 <path d="M166 745 C163 749 164 756 170 758.5 C175 760.5 181 758 183.5 753 C180 755 175 755.5 172.5 752.5 C170 750 168.5 747 168.5 744.5 Z" fill="#0b4f9c"/>
 <path d="M160 748 C160.5 740.5 166 736 172 736 C179 736 184 741 184 747 C184 751 181 753.5 177 753.5 C174 753.5 172 752 171.5 751 C174 751 175.8 749.5 175.8 747.3 C175.8 744.5 173.5 742.5 170 742.5 C165 742.5 161.5 745 160 748 Z" fill="url(#eg)"/>
 <circle cx="171.6" cy="747.6" r="3" fill="#4a3e47"/>
 <!-- explorer -->
 <rect x="210" y="739" width="21.5" height="17" fill="#ffd35c"/>
 <rect x="210" y="739" width="9.5" height="3" fill="#e9a70f"/>
 <rect x="210" y="742" width="21.5" height="14" fill="#ffda6a"/>
 <path d="M214 757 V750 C214 749.3 214.5 748.8 215.2 748.8 H226.5 C227.2 748.8 227.7 749.3 227.7 750 V757 H223.8 V752.2 H218 V757 Z" fill="#3d98e3"/>
 <!-- store -->
 <path d="M258 740.5 H281 V757 C281 759 279.8 760 277.8 760 H261.2 C259.2 760 258 759 258 757 Z" fill="#f2f2f2"/>
 <path d="M263.5 742.5 V738.5 C263.5 737.8 264 737.3 264.7 737.3 H274.3 C275 737.3 275.5 737.8 275.5 738.5 V742.5" fill="none" stroke="#2aa8ec" stroke-width="1.8"/>
 <rect x="265" y="746" width="4" height="4" fill="#f25022"/><rect x="270" y="746" width="4" height="4" fill="#7fba00"/>
 <rect x="265" y="751" width="4" height="4" fill="#00a4ef"/><rect x="270" y="751" width="4" height="4" fill="#ffb900"/>
 <!-- whatsapp -->
 <path d="M308 760 L310 752.5 C307 746 311 736 319 736 C326 736 331 741 331 748 C331 755 325 760 319 760 C316.5 760 314.5 759 312.5 758 Z" fill="#fff"/>
 <circle cx="319" cy="748" r="10.3" fill="#43c553"/>
 <path d="M309.8 758.5 L311.5 752 L315 756.5 Z" fill="#43c553"/>
 <path d="M314.5 742.5 C314 746 316.5 751 322 753.5 C323.5 754 325 753.5 325 751.8 L322.5 750 L321 751 C319 750 317.5 748.5 316.5 746.5 L317.5 745 L315.8 742 Z" fill="#fff"/>
 <!-- chrome -->
 <circle cx="368" cy="748" r="12.3" fill="#1e9e50"/>
 <path d="M368 748 L356.44 743.79 A12.3 12.3 0 0 1 379.56 743.79 Z" fill="#dd4b3e"/>
 <path d="M368 748 L379.56 743.79 A12.3 12.3 0 0 1 372 759.6 Z" fill="#fcc934"/>
 <circle cx="368" cy="748" r="5.5" fill="#fff"/><circle cx="368" cy="748" r="4.3" fill="#3b7ee8"/>
 <circle cx="373.8" cy="754.5" r="7.5" fill="#e0367f"/>
 <text x="370.5" y="758.5" font-family="Liberation Sans" font-size="10" fill="#fff">h</text>
 <!-- excel -->
 <rect x="414" y="740" width="13.5" height="17" fill="#fff" stroke="#21a366" stroke-width="0.8"/>
 <path d="M417 740 V757 M421 740 V757 M414 744 H427.5 M414 748 H427.5 M414 752 H427.5" stroke="#21a366" stroke-width="0.9"/>
 <path d="M405.5 739 L418 736.8 V760.2 L405.5 758 Z" fill="#107c41"/>
 <text x="407.6" y="753.2" font-family="Liberation Sans" font-weight="bold" font-size="11" fill="#fff">X</text>
 <!-- paint drop -->
 <g clip-path="url(#dropc)">
  <rect x="455" y="734" width="22" height="28" fill="#3aa6f0"/>
  <path d="M455 748 L477 758 V734 H455 Z" fill="#8f5fd6"/>
  <path d="M455 741 L477 752 V734 H455 Z" fill="#f05a8c"/>
  <path d="M455 734 L477 745 V734 Z" fill="#fcc934"/>
 </g>
 <!-- tray -->
 <path d="M1017.5 751.5 L1023.3 745.7 L1029 751.5" fill="none" stroke="#fff" stroke-width="1.2"/>
 <g fill="none" stroke="#fff" stroke-width="1.1">
  <rect x="1050.5" y="745.3" width="7.5" height="6.4" rx="1.2"/>
  <path d="M1058 747.2 L1061 745.6 V751.4 L1058 749.8"/>
  <path d="M1051.5 741.8 C1053.5 740.6 1056.5 740.6 1058.5 741.8 M1051.5 754.6 C1053.5 755.8 1056.5 755.8 1058.5 754.6"/>
  <path d="M1079 746.5 H1081.8 L1085 743.5 V754.5 L1081.8 751.5 H1079 Z"/>
  <path d="M1087.3 747 C1088.3 748.2 1088.3 749.8 1087.3 751 M1089.6 745.2 C1091.4 747.4 1091.4 750.6 1089.6 752.8 M1092 743.3 C1094.6 746.4 1094.6 751.6 1092 754.7"/>
  <rect x="1115.5" y="744.5" width="10" height="6"/>
  <path d="M1126.5 746.3 V748.7"/>
  <path d="M1113.5 747.5 V752.7 M1111.3 745 V747.5 H1115.7 V745"/>
  <path d="M1112.2 742.3 V745 M1114.8 742.3 V745"/>
 </g>
 <rect x="1117" y="746" width="5" height="3" fill="#fff"/>
 <g fill="none" stroke="#fff" stroke-width="1.1">
  <path d="M1146.6 755 C1146.6 748.5 1151.5 743.3 1158 743.3 M1149.5 755 C1149.5 750.2 1153.2 746.3 1158 746.3 M1152.4 755 C1152.4 751.8 1155 749.3 1158 749.3"/>
  <rect x="1175.5" y="741.5" width="22" height="12" rx="0.8"/>
 </g>
 <g fill="#fff">
  <rect x="1178" y="744" width="1" height="1"/><rect x="1180" y="744" width="1" height="1"/><rect x="1182" y="744" width="1" height="1"/><rect x="1184" y="744" width="1" height="1"/><rect x="1186" y="744" width="1" height="1"/><rect x="1188" y="744" width="1" height="1"/><rect x="1190" y="744" width="1" height="1"/><rect x="1192" y="744" width="1" height="1"/><rect x="1194" y="744" width="1" height="1"/>
  <rect x="1178" y="747" width="1" height="1"/><rect x="1180" y="747" width="1" height="1"/><rect x="1182" y="747" width="1" height="1"/><rect x="1184" y="747" width="1" height="1"/><rect x="1186" y="747" width="1" height="1"/><rect x="1188" y="747" width="1" height="1"/><rect x="1190" y="747" width="1" height="1"/><rect x="1192" y="747" width="1" height="1"/><rect x="1194" y="747" width="1" height="1"/>
  <rect x="1178" y="750" width="2" height="1"/><rect x="1181" y="750" width="11" height="1"/><rect x="1193" y="750" width="2" height="1"/>
 </g>
 <circle cx="1157.2" cy="754.3" r="1.3" fill="#fff"/>
 <path d="M1325.5 740.5 H1340.5 V752.5 H1335.5 L1333 755 L1330.5 752.5 H1325.5 Z" fill="none" stroke="#fff" stroke-width="1.1"/>
 <rect x="1361" y="728" width="1" height="40" fill="#8c858b"/>
</svg>
<div class="t" style="left:1213px;top:743px;font-size:11px;color:#fff;letter-spacing:-0.3px">ENG</div>
<div class="t" style="left:1264px;top:734px;font-size:11px;color:#fff;letter-spacing:-0.5px">12:41</div>
<div class="t" style="left:1249px;top:751px;font-size:11px;color:#fff;letter-spacing:0.15px">30/08/2023</div>

<!-- ANNOTATIONS -->
<svg class="a" style="left:0;top:0" width="1366" height="768" viewBox="0 0 1366 768">
 <path fill-rule="evenodd" fill="#ed1c24" d="M253 157 H483 V195 H253 Z M263 167 V185 H473 V167 Z"/>
 <path fill-rule="evenodd" fill="#ed1c24" d="M301 197 L330 286.5 H316 V378 H287 V286.5 H272 Z M301 229 L286 277 H297 V368 H306 V277 H316.5 Z"/>
</svg>
<div class="t" style="left:274px;top:453px;font-size:65.6px;color:#ed1c24;letter-spacing:-0.4px">Argument text is</div>
<div class="t" style="left:272px;top:539px;font-size:65.6px;color:#ed1c24;letter-spacing:-1.03px">replaced with A1</div>
</body></html>
